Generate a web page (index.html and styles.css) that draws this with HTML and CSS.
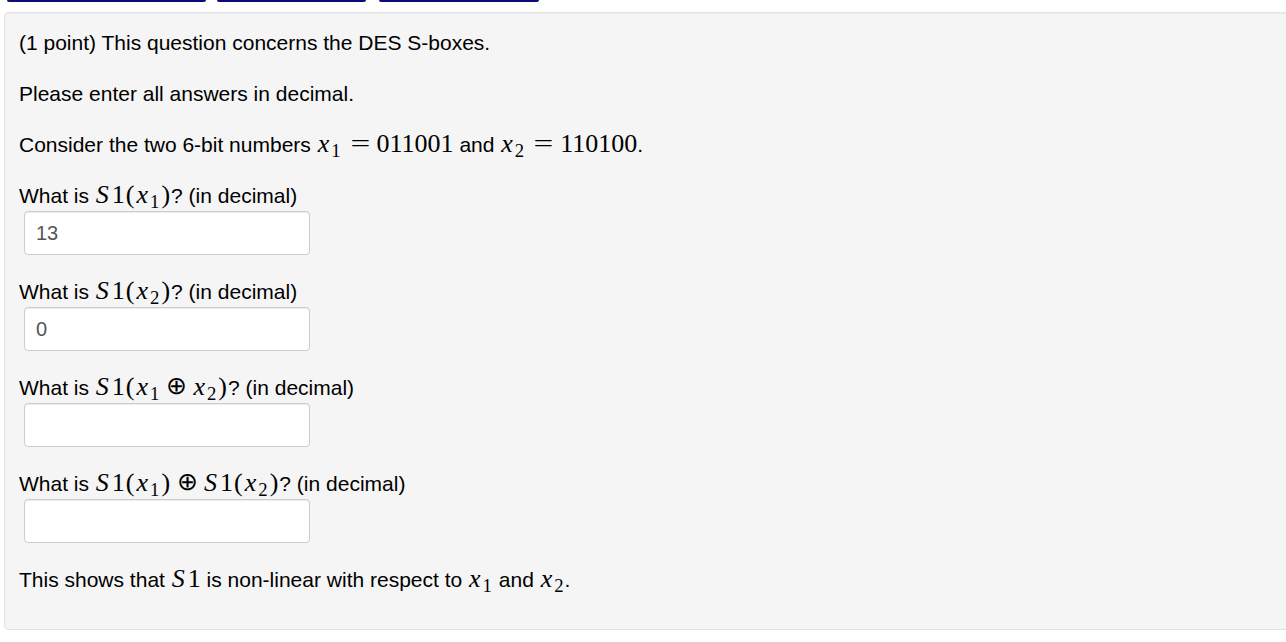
FILE: index.html
```html
<!DOCTYPE html>
<html>
<head>
<meta charset="utf-8">
<link rel="stylesheet" href="styles.css">
</head>
<body>
<div class="tabs">
  <div class="tab t1"></div>
  <div class="tab t2"></div>
  <div class="tab t3"></div>
</div>
<div class="well">
  <p class="line">(1 point) This question concerns the DES S-boxes.</p>
  <p class="line">Please enter all answers in decimal.</p>
  <p class="line">Consider the two 6-bit numbers <span class="math"><i class="x">x</i><sub>1</sub><span class="op">=</span>011001</span> and <span class="math"><i class="x">x</i><sub>2</sub><span class="op">=</span>110100</span>.</p>

  <div class="q">
    <div class="line">What is <span class="math"><i class="s">S</i>1<span class="par">(</span><i class="x">x</i><sub>1</sub><span class="par">)</span></span>? (in decimal)</div>
    <input class="answer" type="text" value="13">
  </div>
  <div class="q">
    <div class="line">What is <span class="math"><i class="s">S</i>1<span class="par">(</span><i class="x">x</i><sub>2</sub><span class="par">)</span></span>? (in decimal)</div>
    <input class="answer" type="text" value="0">
  </div>
  <div class="q">
    <div class="line">What is <span class="math"><i class="s">S</i>1<span class="par">(</span><i class="x">x</i><sub>1</sub><span class="bin">⊕</span><i class="x">x</i><sub>2</sub><span class="par">)</span></span>? (in decimal)</div>
    <input class="answer" type="text" value="">
  </div>
  <div class="q">
    <div class="line">What is <span class="math"><i class="s">S</i>1<span class="par">(</span><i class="x">x</i><sub>1</sub><span class="par">)</span><span class="bin">⊕</span><i class="s">S</i>1<span class="par">(</span><i class="x">x</i><sub>2</sub><span class="par">)</span></span>? (in decimal)</div>
    <input class="answer" type="text" value="">
  </div>
  <p class="line last">This shows that <span class="math"><i class="s">S</i>1</span> is non-linear with respect to <span class="math"><i class="x">x</i><sub>1</sub></span> and <span class="math"><i class="x">x</i><sub>2</sub></span>.</p>
</div>
</body>
</html>
```

FILE: styles.css
```css
html, body {
  margin: 0;
  padding: 0;
  background: #ffffff;
  overflow: hidden;
}
body {
  font-family: "Liberation Sans", Arial, sans-serif;
  font-size: 21px;
  color: #000;
}
.tabs {
  display: flex;
  height: 2px;
  padding-left: 7px;
}
.tab {
  height: 2px;
  background: #0b0b7c;
  border-radius: 0 0 2px 2px;
}
.t1 { width: 199px; }
.t2 { width: 149px; margin-left: 11px; }
.t3 { width: 160px; margin-left: 13px; }

.well {
  margin: 10px -20px 0 4px;
  padding: 18px 14px 37px 14px;
  background: #f5f5f5;
  border: 1px solid #e3e3e3;
  border-radius: 4px;
  box-shadow: inset 0 1px 1px rgba(0,0,0,0.05);
}
.line {
  margin: 0;
  line-height: 24px;
  white-space: nowrap;
}
p.line {
  margin-bottom: 27px;
}
p.line.last {
  margin-bottom: 0;
}
.q {
  margin-bottom: 25px;
}
.answer {
  display: block;
  box-sizing: border-box;
  width: 286px;
  height: 44px;
  margin: 3px 0 0 5px;
  padding: 0 11px;
  font-family: "Liberation Sans", Arial, sans-serif;
  font-size: 20px;
  color: #555;
  background: #fff;
  border: 1px solid #ccc;
  border-radius: 4px;
  box-shadow: inset 0 1px 1px rgba(0,0,0,0.075);
  outline: none;
}
.math {
  font-family: "Liberation Serif", "Times New Roman", serif;
  font-size: 26px;
  line-height: 0;
}
.math i {
  font-style: italic;
}
.math .x {
  margin: 0 1px 0 1px;
  padding-right: 1px;
}
.math .s {
  margin-left: 1px;
  padding-right: 3px;
}
.par {
  padding: 0 1px;
}
.math sub {
  font-size: 0.72em;
  vertical-align: -0.25em;
  line-height: 0;
  padding-right: 1px;
}
.op {
  display: inline-block;
  width: 19px;
  margin: 0 7px 0 9px;
  text-align: center;
  transform: scaleX(1.35);
}
.bin {
  display: inline-block;
  margin: 0 5px 0 6px;
  font-family: "DejaVu Sans", sans-serif;
  font-size: 0.95em;
  font-weight: 300;
  vertical-align: 1px;
}
```
